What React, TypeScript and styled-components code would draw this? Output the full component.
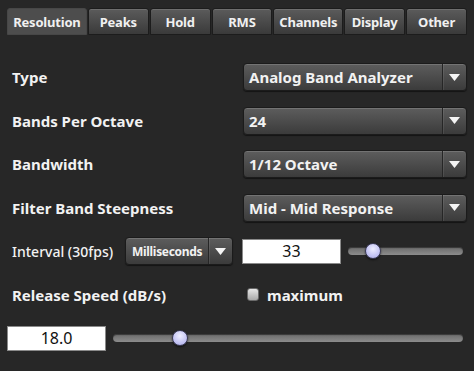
import React, { useState } from "react"
import styled, { createGlobalStyle } from "styled-components"

const GlobalStyle = createGlobalStyle`
  html, body {
    margin: 0;
    padding: 0;
    background: #272727;
    font-family: "Noto Sans", "DejaVu Sans", sans-serif;
  }
`

const tabs = [
  { label: "Resolution", width: 80 },
  { label: "Peaks", width: 61 },
  { label: "Hold", width: 61 },
  { label: "RMS", width: 61 },
  { label: "Channels", width: 70 },
  { label: "Display", width: 61 },
  { label: "Other", width: 61 },
]

const selects = [
  { label: "Type", value: "Analog Band Analyzer" },
  { label: "Bands Per Octave", value: "24" },
  { label: "Bandwidth", value: "1/12 Octave" },
  { label: "Filter Band Steepness", value: "Mid - Mid Response" },
]

const Arrow = () => (
  <svg width="11" height="7" viewBox="0 0 11 7">
    <path d="M0 0 L11 0 L5.5 7 Z" fill="#f4f4f4" />
  </svg>
)

const Slider = ({ value }: { value: number }) => (
  <Track>
    <Thumb style={{ left: `${value * 100}%` }} />
  </Track>
)

export default function App() {
  const [active, setActive] = useState(0)
  const [maximum, setMaximum] = useState(false)

  return (
    <Page>
      <GlobalStyle />
      <TabBar>
        {tabs.map((t, i) => (
          <Tab key={t.label} $w={t.width} $active={i === active} onClick={() => setActive(i)}>
            {t.label}
          </Tab>
        ))}
      </TabBar>

      <Form>
        {selects.map((s) => (
          <Row key={s.label}>
            <Label>{s.label}</Label>
            <Select $w={224}>
              <SelectText>{s.value}</SelectText>
              <ArrowBox>
                <Arrow />
              </ArrowBox>
            </Select>
          </Row>
        ))}

        <Row>
          <SmallLabel>Interval (30fps)</SmallLabel>
          <IntervalControls>
            <Select $w={108} $small>
              <SelectText $small>Milliseconds</SelectText>
              <ArrowBox>
                <Arrow />
              </ArrowBox>
            </Select>
            <NumberBox $w={99}>33</NumberBox>
            <SliderWrap $w={115}>
              <Slider value={0.22} />
            </SliderWrap>
          </IntervalControls>
        </Row>

        <Row>
          <Label>Release Speed (dB/s)</Label>
          <CheckLine onClick={() => setMaximum(!maximum)}>
            <CheckBox $on={maximum} />
            <CheckText>maximum</CheckText>
          </CheckLine>
        </Row>

        <BottomRow>
          <NumberBox $w={99}>18.0</NumberBox>
          <SliderWrap $w={350}>
            <Slider value={0.19} />
          </SliderWrap>
        </BottomRow>
      </Form>
    </Page>
  )
}

const Page = styled.div`
  width: 474px;
  height: 371px;
  box-sizing: border-box;
  padding: 8px 7px 0 7px;
  background: #272727;
  overflow: hidden;
`

const TabBar = styled.div`
  display: flex;
  gap: 1px;
  height: 27px;
`

const Tab = styled.div<{ $w: number; $active: boolean }>`
  width: ${(p) => p.$w}px;
  box-sizing: border-box;
  display: flex;
  align-items: center;
  justify-content: center;
  font-size: 13px;
  font-weight: 700;
  letter-spacing: -0.2px;
  color: #f0f0f0;
  border-radius: 3px 3px 0 0;
  cursor: default;
  background: ${(p) =>
    p.$active ? "#4d4d4d" : "linear-gradient(#5b5b5b, #3a3a3a)"};
  border: 1px solid ${(p) => (p.$active ? "#474747" : "#1c1c1c")};
  box-shadow: ${(p) => (p.$active ? "none" : "inset 0 1px 0 rgba(255,255,255,0.12)")};
`

const Form = styled.div`
  margin-top: 20.5px;
  display: flex;
  flex-direction: column;
`

const Row = styled.div`
  height: 43.5px;
  display: flex;
  align-items: center;
  justify-content: space-between;
  padding-left: 5px;
`

const BottomRow = styled.div`
  height: 43.5px;
  display: flex;
  align-items: center;
  gap: 7px;
`

const Label = styled.div`
  font-size: 15px;
  font-weight: 700;
  color: #f2f2f2;
`

const SmallLabel = styled.div`
  font-size: 14px;
  font-weight: 500;
  color: #f2f2f2;
  width: 113px;
`

const Select = styled.div<{ $w: number; $small?: boolean }>`
  width: ${(p) => p.$w}px;
  height: 28px;
  box-sizing: border-box;
  display: flex;
  align-items: stretch;
  border: 1px solid #1b1b1b;
  border-radius: 4px;
  background: linear-gradient(#5d5d5d, #3b3b3b);
  box-shadow: inset 0 1px 0 rgba(255, 255, 255, 0.14), 0 1px 1px rgba(0, 0, 0, 0.5);
  color: #f2f2f2;
`

const SelectText = styled.div<{ $small?: boolean }>`
  flex: 1;
  display: flex;
  align-items: center;
  padding-left: ${(p) => (p.$small ? "6px" : "5px")};
  font-size: ${(p) => (p.$small ? "12px" : "15px")};
  font-weight: 700;
  letter-spacing: ${(p) => (p.$small ? "-0.3px" : "0")};
  white-space: nowrap;
`

const ArrowBox = styled.div`
  width: 23px;
  display: flex;
  align-items: center;
  justify-content: center;
  border-left: 1px solid #262626;
  box-shadow: inset 1px 0 0 rgba(255, 255, 255, 0.08);
`

const IntervalControls = styled.div`
  flex: 1;
  display: flex;
  align-items: center;
`

const NumberBox = styled.div<{ $w: number }>`
  width: ${(p) => p.$w}px;
  height: 25px;
  box-sizing: border-box;
  margin-left: 9px;
  background: #ffffff;
  border: 1px solid #8a8a8a;
  display: flex;
  align-items: center;
  justify-content: center;
  font-size: 16px;
  color: #111;
  ${BottomRow} & {
    margin-left: 0;
  }
`

const SliderWrap = styled.div<{ $w: number }>`
  width: ${(p) => p.$w}px;
  margin-left: 7px;
  ${BottomRow} & {
    margin-left: 0;
  }
`

const Track = styled.div`
  position: relative;
  height: 8px;
  border-radius: 4px;
  background: linear-gradient(#6a6a6a, #8c8c8c);
  box-shadow: inset 0 1px 1px rgba(0, 0, 0, 0.5);
`

const Thumb = styled.div`
  position: absolute;
  top: 50%;
  width: 16px;
  height: 16px;
  margin: -8px 0 0 -8px;
  border-radius: 50%;
  box-sizing: border-box;
  border: 1px solid #3a3a55;
  background: radial-gradient(circle at 50% 35%, #eeeeff, #c4c4f4 60%, #a8a8e0);
  box-shadow: 0 1px 2px rgba(0, 0, 0, 0.6);
`

const CheckLine = styled.div`
  width: 220px;
  display: flex;
  align-items: center;
  gap: 8px;
  cursor: default;
`

const CheckBox = styled.div<{ $on: boolean }>`
  width: 12px;
  height: 13px;
  box-sizing: border-box;
  border-radius: 3px;
  border: 1px solid #6a6a6a;
  background: ${(p) =>
    p.$on ? "linear-gradient(#9ab8f0, #4a78d0)" : "linear-gradient(#e6e6e6, #a8a8a8)"};
`

const CheckText = styled.div`
  font-size: 15px;
  font-weight: 700;
  color: #f2f2f2;
`
